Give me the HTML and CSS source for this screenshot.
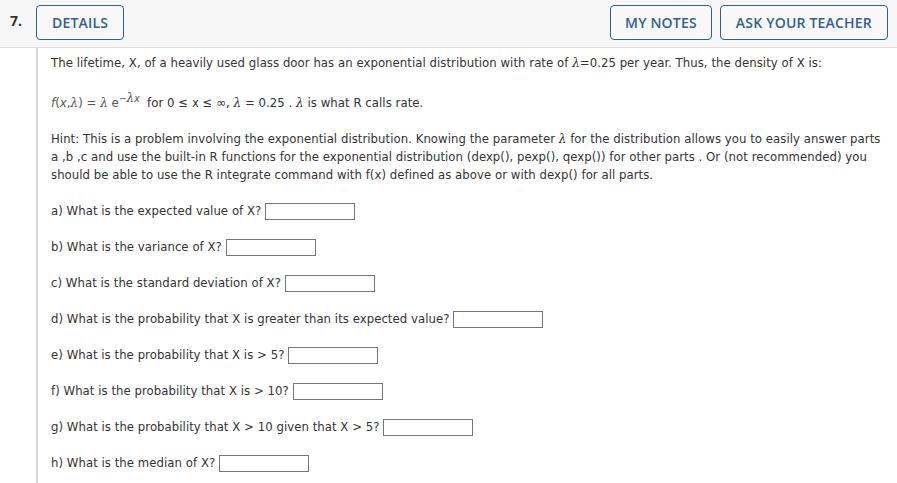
FILE: index.html
```html
<!DOCTYPE html>
<html>
<head>
<meta charset="utf-8">
<link rel="stylesheet" href="styles.css">
</head>
<body>
<div class="header">
  <div class="left">
    <span class="num">7.</span>
    <button class="btn">DETAILS</button>
  </div>
  <div class="right">
    <button class="btn notes">MY NOTES</button>
    <button class="btn ask">ASK YOUR TEACHER</button>
  </div>
</div>
<div class="content">
  <p>The lifetime, X, of a heavily used glass door has an exponential distribution with rate of <span class="lam">λ</span>=0.25 per year. Thus, the density of X is:</p>
  <p class="formula"><span class="math"><i>f</i>(<i>x</i>,<span class="lam">λ</span>) = <span class="lam">λ</span> e<sup>−<span class="lam">λ</span><i>x</i></sup></span>&nbsp; for 0 ≤ x ≤ ∞, <span class="lam">λ</span> = 0.25 . <span class="lam">λ</span> is what R calls rate.</p>
  <p>Hint: This is a problem involving the exponential distribution. Knowing the parameter <span class="lam">λ</span> for the distribution allows you to easily answer parts a ,b ,c and use the built-in R functions for the exponential distribution (dexp(), pexp(), qexp()) for other parts . Or (not recommended) you should be able to use the R integrate command with f(x) defined as above or with dexp() for all parts.</p>
  <p>a) What is the expected value of X? <input class="ans" type="text"></p>
  <p>b) What is the variance of X? <input class="ans" type="text"></p>
  <p>c) What is the standard deviation of X? <input class="ans" type="text"></p>
  <p>d) What is the probability that X is greater than its expected value? <input class="ans" type="text"></p>
  <p>e) What is the probability that X is &gt; 5? <input class="ans" type="text"></p>
  <p>f) What is the probability that X is &gt; 10? <input class="ans" type="text"></p>
  <p>g) What is the probability that X &gt; 10 given that X &gt; 5? <input class="ans" type="text"></p>
  <p>h) What is the median of X? <input class="ans" type="text"></p>
</div>
</body>
</html>
```
FILE: styles.css
```css
html, body {
  margin: 0;
  padding: 0;
  background: #fff;
}
body {
  font-family: "DejaVu Sans Condensed", "DejaVu Sans", sans-serif;
  color: #333;
  width: 897px;
  height: 483px;
  overflow: hidden;
}
.header {
  display: flex;
  justify-content: space-between;
  align-items: flex-start;
  background: #f6f6f6;
  border-bottom: 1px solid #dcdcdc;
  height: 47px;
  box-sizing: content-box;
}
.left {
  display: flex;
  align-items: flex-start;
}
.num {
  font-family: "Open Sans", sans-serif;
  font-weight: 700;
  font-size: 14px;
  color: #333;
  width: 36px;
  box-sizing: border-box;
  padding-left: 10px;
  line-height: 18px;
  margin-top: 12px;
}
.right {
  display: flex;
  gap: 8px;
  margin-right: 9px;
}
.btn {
  margin-top: 5px;
  height: 35px;
  padding: 0 15px;
  border: 1px solid #2e5f92;
  border-radius: 4px;
  background: #f8f8f8;
  color: #33608f;
  font-family: "Open Sans", sans-serif;
  font-weight: 600;
  font-size: 14px;
  letter-spacing: 0.2px;
}
.btn.notes {
  padding: 0 14px;
}
.btn.ask {
  padding: 0 15px;
}
.content {
  margin-left: 36px;
  border-left: 2px solid #d6d6d6;
  padding: 6px 14px 0 13px;
  height: 430px;
  font-size: 13px;
  line-height: 18px;
  letter-spacing: 0.05px;
}
.content p {
  margin: 0 0 18px 0;
}
.content p.formula {
  margin-top: 20px;
}
.lam {
  font-family: "DejaVu Serif", serif;
  font-style: italic;
  font-size: 12px;
  line-height: 1;
}
.math {
  color: #555;
}
.math i {
  font-style: italic;
}
sup {
  font-size: 10px;
  line-height: 0;
  vertical-align: 5px;
}
.ans {
  width: 90px;
  height: 17px;
  box-sizing: border-box;
  border: 1px solid #767676;
  border-radius: 0;
  padding: 0;
  margin: 0;
  vertical-align: middle;
  background: #fff;
}
```
